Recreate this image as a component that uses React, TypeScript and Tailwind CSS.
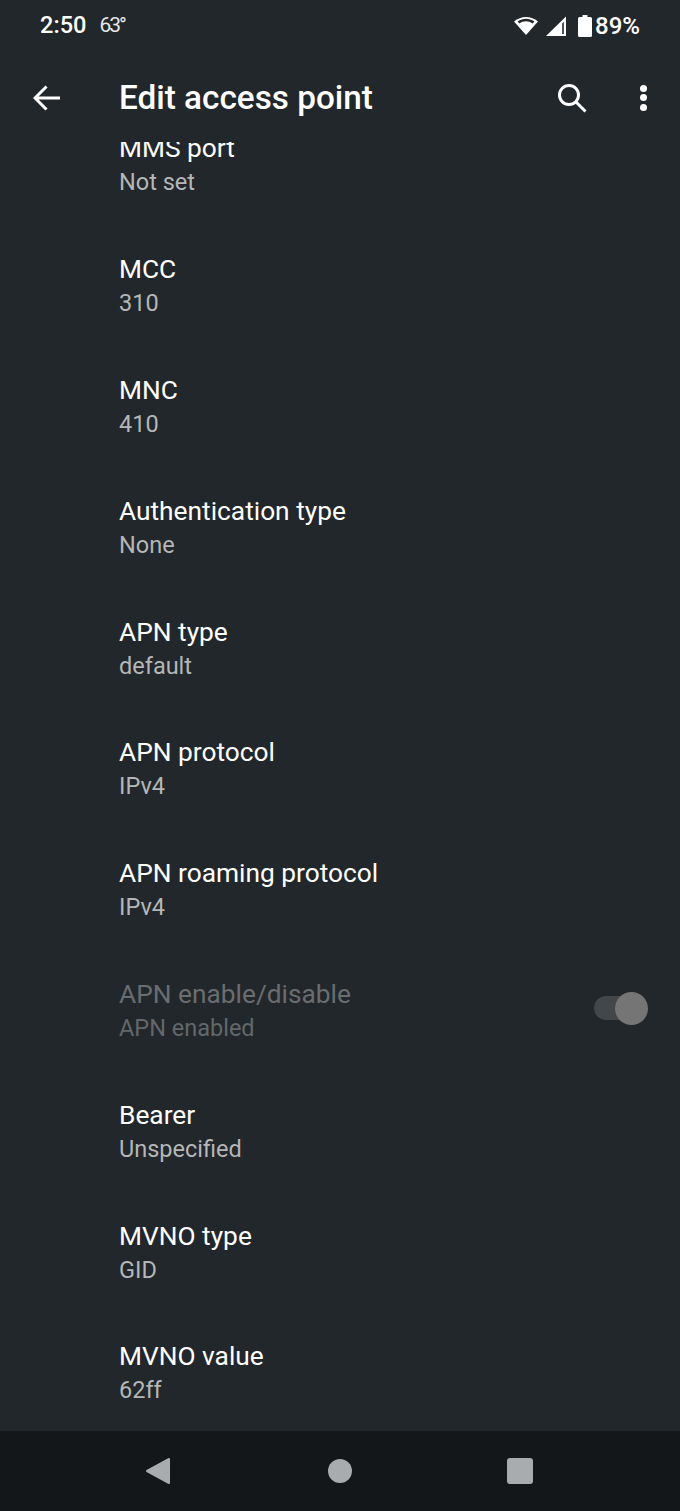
const rows: [string, string][] = [
  ["MMS port", "Not set"],
  ["MCC", "310"],
  ["MNC", "410"],
  ["Authentication type", "None"],
  ["APN type", "default"],
  ["APN protocol", "IPv4"],
  ["APN roaming protocol", "IPv4"],
  ["APN enable/disable", "APN enabled"],
  ["Bearer", "Unspecified"],
  ["MVNO type", "GID"],
  ["MVNO value", "62ff"],
];

function StatusIcons() {
  return (
    <div className="flex items-center">
      <svg width="26" height="21" viewBox="0 0 26 21" className="mr-[6px]">
        <path d="M1 5.5 C8 -0.5 18 -0.5 25 5.5 L13 19 Z" fill="#fff" />
        <path d="M6.4 7.4 C10.5 4.6 15.5 4.6 19.6 7.4 L21.4 5.4 C16 1.8 10 1.8 4.6 5.4 Z" fill="#22272b" />
      </svg>
      <svg width="22" height="21" viewBox="0 0 22 21" className="mr-[11px]">
        <path d="M1 20 L21 0.5 V20 Z" fill="#fff" />
        <path d="M17.2 7.5 V18 H18.8 V5.8 Z" fill="#22272b" />
      </svg>
      <svg width="14" height="22" viewBox="0 0 14 22" className="mr-[3px]">
        <path d="M4.5 0 H9.5 V2 H12.5 Q14 2 14 3.5 V20.5 Q14 22 12.5 22 H1.5 Q0 22 0 20.5 V3.5 Q0 2 1.5 2 H4.5 Z" fill="#fff" />
      </svg>
      <span className="text-[24px] font-medium leading-none text-white">89%</span>
    </div>
  );
}

export default function App() {
  return (
    <div className="flex h-[1511px] w-[680px] flex-col overflow-hidden bg-[#22272b] font-['Roboto',sans-serif]">
      <div className="flex h-[52px] shrink-0 items-center justify-between px-[40px]">
        <div className="flex items-center">
          <span className="text-[23.6px] font-medium leading-none text-white">2:50</span>
          <span className="ml-[13px] -mt-[2px] text-[21px] leading-none text-[#e8e8e8] tracking-[-2px]">63°</span>
        </div>
        <StatusIcons />
      </div>
      <div className="flex h-[90px] shrink-0 items-center pt-[1px]">
        <div className="flex w-[119px] shrink-0 pl-[33px]">
          <svg width="27" height="26" viewBox="0 0 27 26" fill="none" stroke="#fff" strokeWidth="3">
            <path d="M27 13 H3 M13.5 1.5 L2 13 L13.5 24.5" />
          </svg>
        </div>
        <span className="mt-[1px] flex-1 text-[33.3px] font-medium leading-none text-white">Edit access point</span>
        <svg width="30" height="30" viewBox="0 0 30 30" fill="none" stroke="#fff" strokeWidth="3" className="mr-[53px]">
          <circle cx="12" cy="12" r="9.5" />
          <path d="M19 19 L28.5 28.5" />
        </svg>
        <div className="mr-[33px] flex flex-col gap-[2.5px]">
          <div className="h-[7px] w-[7px] rounded-full bg-white" />
          <div className="h-[7px] w-[7px] rounded-full bg-white" />
          <div className="h-[7px] w-[7px] rounded-full bg-white" />
        </div>
      </div>
      <div className="min-h-0 flex-1 overflow-hidden">
        <div className="-mt-[37px]">
          {rows.map(([title, sub]) => {
            const off = title === "APN enable/disable";
            return (
              <div key={title} className="flex h-[120.8px] items-center pl-[119px] pr-[38px]">
                <div className="flex-1">
                  <div className={`text-[26.3px] leading-[34px] ${off ? "text-[#6a6d70]" : "text-white"}`}>{title}</div>
                  <div className={`text-[23.5px] leading-[34px] ${off ? "text-[#63676a]" : "text-[#b4b6b8]"}`}>{sub}</div>
                </div>
                {off && (
                  <div className="relative mb-[5px] h-[24px] w-[48px] rounded-full bg-[#43474a]">
                    <div className="absolute -right-[6px] -top-[4px] h-[33px] w-[33px] rounded-full bg-[#757575]" />
                  </div>
                )}
              </div>
            );
          })}
        </div>
      </div>
      <div className="flex h-[80px] shrink-0 items-center justify-center bg-[#14171a] pr-[2px]">
        <svg width="26" height="28" viewBox="0 0 26 28" className="mr-[157px]">
          <path d="M24 2 V26 L2 14 Z" fill="#a9acaf" stroke="#a9acaf" strokeWidth="2" strokeLinejoin="round" />
        </svg>
        <div className="mr-[155px] h-[24px] w-[24px] rounded-full bg-[#a9acaf]" />
        <div className="h-[26px] w-[26px] rounded-[3px] bg-[#a9acaf]" />
      </div>
    </div>
  );
}
